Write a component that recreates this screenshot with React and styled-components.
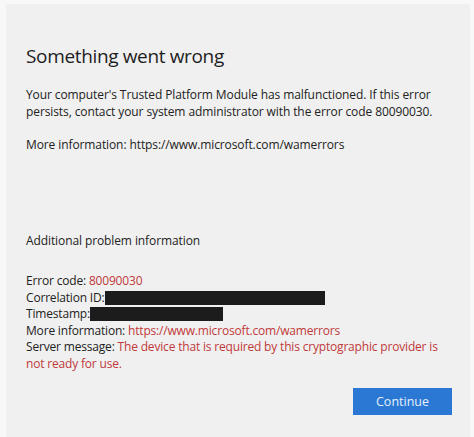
import React from "react";
import styled, { createGlobalStyle } from "styled-components";

const GlobalStyle = createGlobalStyle`
  html, body {
    margin: 0;
    padding: 0;
    background: #f8f8f8;
  }
  body {
    font-family: "Open Sans", "Noto Sans", sans-serif;
    color: #222;
  }
`;

const Dialog = styled.div`
  margin: 4px 4px 0 6px;
  height: 433px;
  box-sizing: border-box;
  background: #f0f0f0;
  padding: 38px 26px 0 20px;
  display: flex;
  flex-direction: column;
`;

const Title = styled.h1`
  margin: 0;
  font-size: 19px;
  font-weight: 400;
  line-height: 28px;
  color: #1e1e1e;
  letter-spacing: -0.35px;
`;

const Para = styled.p`
  margin: ${(p) => p.$top || 0}px 0 0;
  font-size: 12px;
  line-height: 17px;
  letter-spacing: -0.1px;
`;

const SubHeading = styled.h2`
  margin: 79px 0 0;
  font-size: 12px;
  font-weight: 400;
  line-height: 17px;
  letter-spacing: -0.1px;
`;

const Details = styled.div`
  margin-top: 24px;
  font-size: 12px;
  line-height: 16.6px;
  letter-spacing: -0.18px;
`;

const Line = styled.div``;

const Red = styled.span`
  color: #c0393a;
`;

const Redacted = styled.span`
  display: inline-block;
  vertical-align: -3px;
  width: ${(p) => p.$w}px;
  height: 14px;
  background: #1c1c1c;
`;

const Footer = styled.div`
  display: flex;
  justify-content: flex-end;
  margin: 15px -8px 0 0;
`;

const Button = styled.button`
  width: 99px;
  height: 27px;
  border: none;
  background: #2b78d4;
  color: #e6f0fb;
  font-family: inherit;
  font-size: 12.5px;
  padding: 0;
  cursor: pointer;
`;

export default function App() {
  return (
    <>
      <GlobalStyle />
      <Dialog>
        <Title>Something went wrong</Title>
        <Para $top={16}>
          Your computer's Trusted Platform Module has malfunctioned. If this
          error persists, contact your system administrator with the error
          code 80090030.
        </Para>
        <Para $top={16}>More information: https://www.microsoft.com/wamerrors</Para>
        <SubHeading>Additional problem information</SubHeading>
        <Details>
          <Line>
            Error code: <Red>80090030</Red>
          </Line>
          <Line>
            Correlation ID:<Redacted $w={220} />
          </Line>
          <Line>
            Timestamp:<Redacted $w={133} />
          </Line>
          <Line>
            More information: <Red>https://www.microsoft.com/wamerrors</Red>
          </Line>
          <Line>
            Server message:{" "}
            <Red>
              The device that is required by this cryptographic provider is
              not ready for use.
            </Red>
          </Line>
        </Details>
        <Footer>
          <Button>Continue</Button>
        </Footer>
      </Dialog>
    </>
  );
}
